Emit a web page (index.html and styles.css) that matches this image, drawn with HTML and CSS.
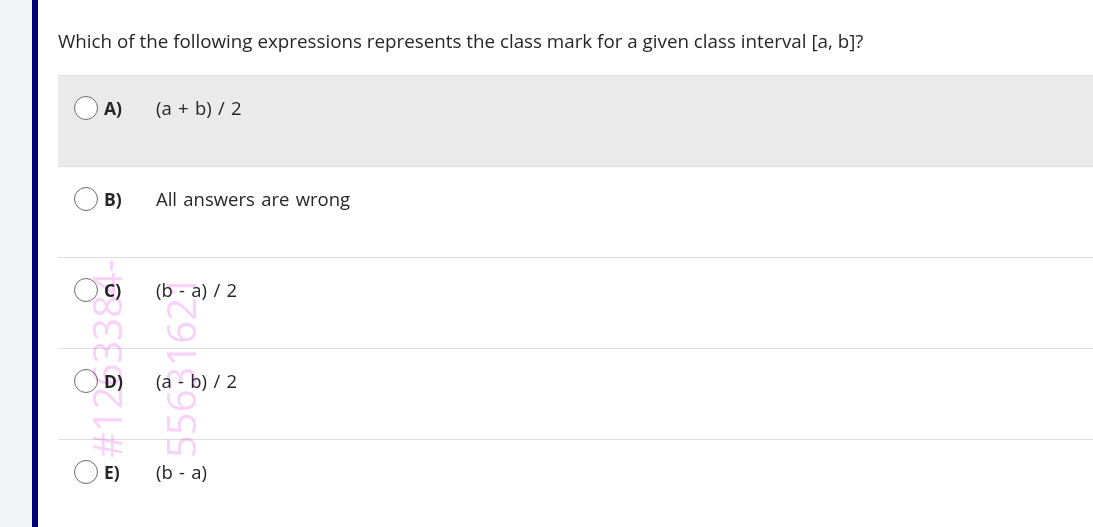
FILE: index.html
```html
<!DOCTYPE html>
<html>
<head>
<meta charset="utf-8">
<link rel="stylesheet" href="styles.css">
</head>
<body>
<div class="page">
  <div class="gutter"></div>
  <div class="bar"></div>
  <main class="content">
    <p class="question">Which of the following expressions represents the class mark for a given class interval [a, b]?</p>
    <ul class="options">
      <li class="option selected"><span class="radio"></span><span class="letter">A)</span><span class="answer">(a + b) / 2</span></li>
      <li class="option"><span class="radio"></span><span class="letter">B)</span><span class="answer">All answers are wrong</span></li>
      <li class="option"><span class="radio"></span><span class="letter">C)</span><span class="answer">(b - a) / 2</span></li>
      <li class="option"><span class="radio"></span><span class="letter">D)</span><span class="answer">(a - b) / 2</span></li>
      <li class="option"><span class="radio"></span><span class="letter">E)</span><span class="answer">(b - a)</span></li>
    </ul>
    <div class="watermark wm1">#1263384-</div>
    <div class="watermark wm2">55631621</div>
  </main>
</div>
</body>
</html>
```

FILE: styles.css
```css
html, body {
  margin: 0;
  padding: 0;
  background: #ffffff;
  overflow: hidden;
}
.page {
  display: flex;
  height: 527px;
  font-family: "Open Sans", "Noto Sans", sans-serif;
  color: #262626;
}
.gutter {
  width: 32px;
  background: #f4f5f8;
  flex: none;
}
.bar {
  width: 6px;
  background: #00007f;
  flex: none;
}
.content {
  position: relative;
  flex: 1;
  padding-left: 20px;
}
.question {
  margin: 28px 0 0 0;
  font-size: 18.8px;
  line-height: 26px;
}
.options {
  list-style: none;
  margin: 21px 0 0 0;
  padding: 0;
}
.option {
  display: flex;
  height: 90px;
  border-top: 1px solid #dedede;
  padding: 0 0 0 16px;
  align-items: flex-start;
}
.option.selected {
  background: #ebebeb;
}
.radio {
  width: 22px;
  height: 22px;
  border: 1.5px solid #6b6b6b;
  border-radius: 50%;
  background: #fff;
  margin-top: 20px;
  flex: none;
}
.letter {
  font-weight: 700;
  font-size: 17.5px;
  margin-left: 6px;
  width: 52px;
  margin-top: 19px;
  line-height: 26px;
}
.answer {
  font-size: 18.5px;
  word-spacing: 1.5px;
  margin-top: 19px;
  line-height: 26px;
}
.watermark {
  position: absolute;
  font-family: "Open Sans", sans-serif;
  font-weight: 400;
  font-size: 40px;
  color: #f8d2f8;
  mix-blend-mode: multiply;
  transform-origin: left top;
  transform: rotate(-90deg);
  white-space: nowrap;
  pointer-events: none;
}
.wm1 {
  left: 41px;
  top: 458px;
}
.wm2 {
  left: 115px;
  top: 458px;
}
```
